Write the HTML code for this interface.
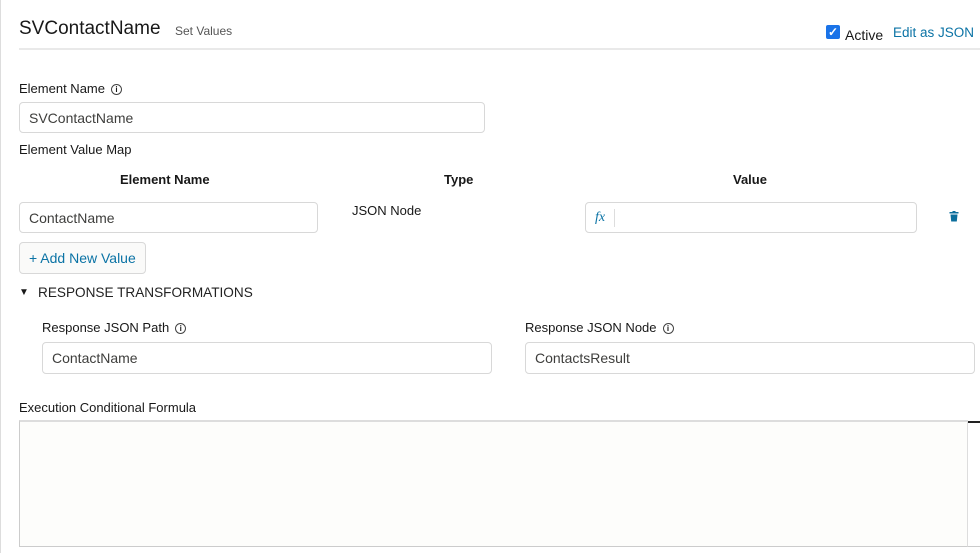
<!DOCTYPE html>
<html><head><meta charset="utf-8"><style>
body{margin:0;width:980px;height:553px;background:#fff;position:relative;overflow:hidden;font-family:"Liberation Sans",sans-serif;color:#181818}
.a{position:absolute;white-space:nowrap}
.in{position:absolute;border:1px solid #d8d8d8;border-radius:4px;background:#fff;box-sizing:border-box;font-size:14px;color:#3e3e3c;padding-left:9px;display:flex;align-items:center}
.lbl{font-size:13px;color:#181818}
.info{display:inline-block;width:9px;height:9px;border:1px solid #444;border-radius:50%;font-size:8px;line-height:9px;text-align:center;margin-left:6px;vertical-align:1px;font-weight:bold}
</style></head><body>
<div class="a" style="left:0;top:0;width:1px;height:553px;background:#ddd"></div>
<div class="a" style="left:19px;top:18px;font-size:19px;color:#181818">SVContactName</div>
<div class="a" style="left:175px;top:24px;font-size:12px;color:#555">Set Values</div>
<div class="a" style="left:19px;top:48px;width:961px;height:2px;background:#e9e9e9"></div>
<div class="a" style="left:826px;top:25px;width:14px;height:14px;background:#1a73e8;border-radius:2px;color:#fff;font-size:12px;line-height:14px;text-align:center;font-weight:bold">✓</div>
<div class="a" style="left:845px;top:27px;font-size:14px">Active</div>
<div class="a" style="left:893px;top:25px;font-size:13.5px;color:#0b73a5">Edit as JSON</div>
<div class="a lbl" style="left:19px;top:81px">Element Name<span class="info">i</span></div>
<div class="in" style="left:19px;top:102px;width:466px;height:31px">SVContactName</div>
<div class="a lbl" style="left:19px;top:142px">Element Value Map</div>
<div class="a" style="left:120px;top:172px;font-size:13px;font-weight:bold">Element Name</div>
<div class="a" style="left:444px;top:172px;font-size:13px;font-weight:bold">Type</div>
<div class="a" style="left:733px;top:172px;font-size:13px;font-weight:bold">Value</div>
<div class="in" style="left:19px;top:202px;width:299px;height:31px">ContactName</div>
<div class="a" style="left:352px;top:203px;font-size:13px">JSON Node</div>
<div class="in" style="left:585px;top:202px;width:332px;height:31px;padding-left:0"><span style="font-family:'Liberation Serif',serif;font-style:italic;color:#0b73a5;font-size:14px;width:28px;text-align:center;border-right:1px solid #ddd;line-height:18px">fx</span></div>
<svg class="a" style="left:949px;top:211px" width="10" height="11" viewBox="0 0 10 11"><rect x="0.5" y="1" width="9" height="1.5" fill="#0b6e9c"/><rect x="3.5" y="0" width="3" height="1.5" fill="#0b6e9c"/><path d="M1.5 3.5h7l-0.7 7h-5.6z" fill="#0b6e9c"/></svg>
<div class="in" style="left:19px;top:242px;width:127px;height:32px;background:#fafaf9;color:#0b73a5;font-size:14px">+ Add New Value</div>
<div class="a" style="left:19px;top:287px;font-size:10px">▼</div>
<div class="a" style="left:38px;top:285px;font-size:13.6px;color:#222">RESPONSE TRANSFORMATIONS</div>
<div class="a lbl" style="left:42px;top:320px">Response JSON Path<span class="info">i</span></div>
<div class="a lbl" style="left:525px;top:320px">Response JSON Node<span class="info">i</span></div>
<div class="in" style="left:42px;top:342px;width:450px;height:32px">ContactName</div>
<div class="in" style="left:525px;top:342px;width:450px;height:32px">ContactsResult</div>
<div class="a lbl" style="left:19px;top:400px">Execution Conditional Formula</div>
<div class="a" style="box-sizing:border-box;left:19px;top:420px;width:949px;height:127px;background:#fdfdfb;border-top:2px solid #ddd;border-left:1px solid #ccc;border-bottom:1px solid #ccc;border-right:1px solid #ddd"></div>
<div class="a" style="left:968px;top:421px;width:12px;height:2px;background:#222"></div>
<div class="a" style="left:968px;top:546px;width:12px;height:1px;background:#ccc"></div>
</body></html>
